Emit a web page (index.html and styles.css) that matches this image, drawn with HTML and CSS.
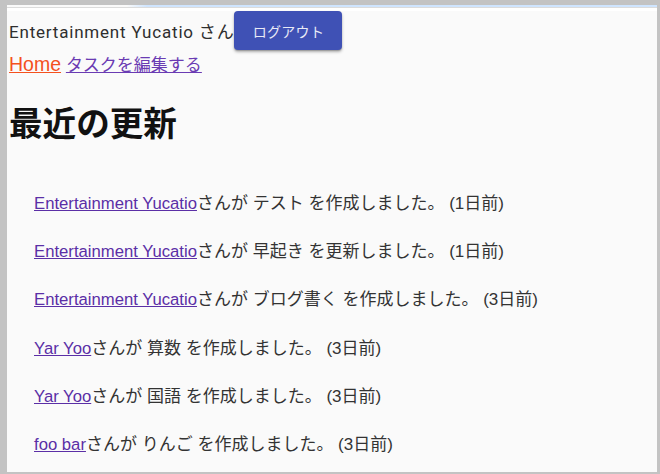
FILE: index.html
```html
<!DOCTYPE html>
<html lang="ja">
<head>
<meta charset="utf-8">
<title>最近の更新</title>
<link rel="stylesheet" href="styles.css">
</head>
<body>
<div class="window">
  <div class="topbar"></div>
  <div class="page">
    <div class="userbar">
      <span class="username">Entertainment Yucatio さん</span>
      <button class="logout">ログアウト</button>
    </div>
    <nav class="nav">
      <a class="nav-home" href="#">Home</a> <a class="nav-edit" href="#">タスクを編集する</a>
    </nav>
    <h1 class="title">最近の更新</h1>
    <ul class="feed">
      <li class="feed-item"><a class="feed-user" href="#">Entertainment Yucatio</a><span class="feed-text">さんが テスト を作成しました。 (1日前)</span></li>
      <li class="feed-item"><a class="feed-user" href="#">Entertainment Yucatio</a><span class="feed-text">さんが 早起き を更新しました。 (1日前)</span></li>
      <li class="feed-item"><a class="feed-user" href="#">Entertainment Yucatio</a><span class="feed-text">さんが ブログ書く を作成しました。 (3日前)</span></li>
      <li class="feed-item"><a class="feed-user" href="#">Yar Yoo</a><span class="feed-text">さんが 算数 を作成しました。 (3日前)</span></li>
      <li class="feed-item"><a class="feed-user" href="#">Yar Yoo</a><span class="feed-text">さんが 国語 を作成しました。 (3日前)</span></li>
      <li class="feed-item"><a class="feed-user" href="#">foo bar</a><span class="feed-text">さんが りんご を作成しました。 (3日前)</span></li>
    </ul>
  </div>
</div>
</body>
</html>
```

FILE: styles.css
```css
html, body {
  margin: 0;
  padding: 0;
  height: 100%;
  background: #c3c3c3;
  overflow: hidden;
}

.window {
  margin: 5px 3px 0 7px;
  height: 467px;
  background: #fafafa;
  overflow: hidden;
}

.topbar {
  height: 2px;
  margin-bottom: 3px;
  border-bottom: 1px solid #dcdcdc;
  background: linear-gradient(to right, #fafafa 0, #fafafa 120px, #cfe5ff 140px, #cfe5ff 100%);
  box-shadow: 0 3px 0 #ffffff;
}

.page {
  padding-left: 2px;
  font-family: Roboto, "Noto Sans CJK JP", sans-serif;
  color: #333;
}

.userbar {
  display: flex;
  align-items: center;
  height: 39px;
}

.username {
  font-family: Roboto, "Noto Sans CJK JP", sans-serif;
  font-size: 17px;
  letter-spacing: 0.8px;
  color: #2e2e2e;
  white-space: nowrap;
}

.logout {
  flex: none;
  width: 108px;
  height: 39px;
  margin: 0;
  padding: 0;
  border: 0;
  border-radius: 4px;
  background: #3f51b5;
  color: #e8eaf6;
  font-family: "Noto Sans CJK JP", sans-serif;
  font-size: 14px;
  letter-spacing: 0.3px;
  box-shadow: 0 2px 3px rgba(0, 0, 0, 0.3), 0 1px 1px rgba(0, 0, 0, 0.15);
}

.nav {
  margin-top: 2px;
  height: 24px;
  line-height: 24px;
  font-size: 19.5px;
}

.nav-home {
  font-family: "Liberation Sans", sans-serif;
  color: #f4511e;
}

.nav-edit {
  font-family: "Noto Sans CJK JP", sans-serif;
  font-size: 17px;
  color: #6a3bb3;
}

.title {
  margin: 26px 0 0;
  height: 40px;
  line-height: 40px;
  font-family: "Noto Sans CJK JP", sans-serif;
  font-size: 33.6px;
  font-weight: bold;
  color: #111;
}

.feed {
  list-style: none;
  margin: 38px 0 0;
  padding: 0 0 0 25px;
}

.feed-item {
  height: 48.2px;
  line-height: 48.2px;
  white-space: nowrap;
}

.feed-user {
  font-family: "Liberation Sans", sans-serif;
  font-size: 16.7px;
  color: #5b2fa6;
}

.feed-text {
  font-family: "Liberation Sans", "Noto Sans CJK JP", sans-serif;
  font-size: 17px;
  color: #333;
}
```
